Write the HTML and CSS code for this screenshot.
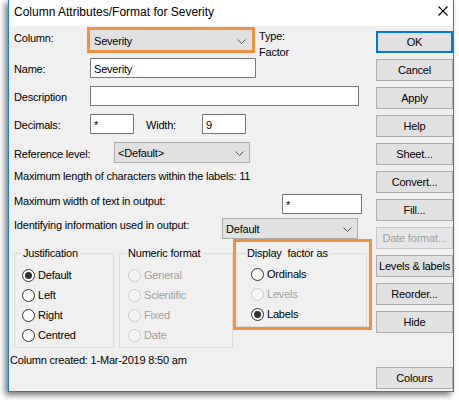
FILE: index.html
```html
<!DOCTYPE html>
<html>
<head>
<meta charset="utf-8">
<link rel="stylesheet" href="styles.css">
</head>
<body>
<div class="dialog">
  <div class="titlebar">
    <span class="title">Column Attributes/Format for Severity</span>
    <svg class="close" width="10" height="10" viewBox="0 0 10 10"><path d="M0.5 0.5 L9.5 9.5 M9.5 0.5 L0.5 9.5" stroke="#000" stroke-width="1.1" fill="none"/></svg>
  </div>
  <div class="content">
    <div class="form">
      <div class="row row-column">
        <span class="lbl lbl-column">Column:</span>
        <div class="hl">
          <div class="combo combo-col"><span>Severity</span><svg class="chev" width="9" height="5" viewBox="0 0 9 5"><polyline points="0.5,0.5 4.5,4.5 8.5,0.5" fill="none" stroke="#555" stroke-width="1"/></svg></div>
        </div>
        <div class="type">Type:<br>Factor</div>
      </div>
      <div class="row row-name">
        <span class="lbl">Name:</span>
        <div class="input w-name">Severity</div>
      </div>
      <div class="row row-desc">
        <span class="lbl">Description</span>
        <div class="input w-desc"></div>
      </div>
      <div class="row row-dec">
        <span class="lbl">Decimals:</span>
        <div class="input w-small">*</div>
        <span class="lbl lbl-width">Width:</span>
        <div class="input w-small">9</div>
      </div>
      <div class="row row-ref">
        <span class="lbl lbl-ref">Reference level:</span>
        <div class="combo w-ref"><span>&lt;Default&gt;</span><svg class="chev" width="9" height="5" viewBox="0 0 9 5"><polyline points="0.5,0.5 4.5,4.5 8.5,0.5" fill="none" stroke="#555" stroke-width="1"/></svg></div>
      </div>
      <div class="maxlen">Maximum length of characters within the labels: 11</div>
      <div class="row row-maxw">
        <span class="lbl lbl-maxw">Maximum width of text in output:</span>
        <div class="input w-maxw">*</div>
      </div>
      <div class="row row-ident">
        <span class="lbl lbl-ident">Identifying information used in output:</span>
        <div class="combo w-ident"><span>Default</span><svg class="chev" width="9" height="5" viewBox="0 0 9 5"><polyline points="0.5,0.5 4.5,4.5 8.5,0.5" fill="none" stroke="#555" stroke-width="1"/></svg></div>
      </div>
      <div class="groups">
        <div class="group g-just">
          <div class="legend">Justification</div>
          <div class="radios">
            <div class="radio"><span class="dot on"></span>Default</div>
            <div class="radio"><span class="dot"></span>Left</div>
            <div class="radio"><span class="dot"></span>Right</div>
            <div class="radio"><span class="dot"></span>Centred</div>
          </div>
        </div>
        <div class="group g-num">
          <div class="legend">Numeric format</div>
          <div class="radios">
            <div class="radio off"><span class="dot"></span>General</div>
            <div class="radio off"><span class="dot"></span>Scientific</div>
            <div class="radio off"><span class="dot"></span>Fixed</div>
            <div class="radio off"><span class="dot"></span>Date</div>
          </div>
        </div>
        <div class="hl-group">
          <div class="group g-disp">
            <div class="legend">Display&nbsp; factor as</div>
            <div class="radios">
              <div class="radio"><span class="dot"></span>Ordinals</div>
              <div class="radio off"><span class="dot"></span>Levels</div>
              <div class="radio"><span class="dot on"></span>Labels</div>
            </div>
          </div>
        </div>
      </div>
      <div class="created">Column created: 1-Mar-2019 8:50 am</div>
    </div>
    <div class="buttons">
      <div class="btn default">OK</div>
      <div class="btn">Cancel</div>
      <div class="btn">Apply</div>
      <div class="btn">Help</div>
      <div class="btn">Sheet...</div>
      <div class="btn">Convert...</div>
      <div class="btn">Fill...</div>
      <div class="btn disabled">Date format...</div>
      <div class="btn">Levels &amp; labels</div>
      <div class="btn">Reorder...</div>
      <div class="btn">Hide</div>
      <div class="btn last">Colours</div>
    </div>
  </div>
</div>
</body>
</html>
```
FILE: styles.css
```css
* { box-sizing: border-box; }
html, body { margin: 0; padding: 0; }
body {
  width: 459px;
  height: 400px;
  overflow: hidden;
  background: #fff;
  font-family: "Liberation Sans", Arial, sans-serif;
  font-size: 11px;
  line-height: 13px;
  letter-spacing: -0.2px;
  color: #000;
}
.dialog {
  margin-left: 8px;
  width: 446px;
  height: 392px;
  background: #f0f0f0;
  border: 1px solid #1c7fd6;
  border-top: none;
  box-shadow: -3px 3px 6px rgba(0, 0, 0, 0.55);
  display: flex;
  flex-direction: column;
}
.titlebar {
  height: 26px;
  background: #fff;
  display: flex;
  align-items: center;
  padding-left: 5px;
  flex: none;
}
.title {
  font-family: "Liberation Sans", Arial, sans-serif;
  font-size: 12px;
  letter-spacing: 0;
  line-height: 16px;
  padding-bottom: 2px;
}
.close { margin-left: auto; margin-right: 5px; margin-bottom: 4px; }
.content {
  flex: 1;
  display: flex;
}
.form {
  width: 366px;
  padding-left: 5px;
  display: flex;
  flex-direction: column;
}
.row { display: flex; align-items: flex-start; }
.lbl { width: 76px; flex: none; padding-top: 5px; }
.row-column { margin-top: 1px; height: 26px; }
.lbl-column { width: 73px; padding-top: 5px; }
.hl {
  border: 3px solid #f0913f;
  width: 168px;
  height: 26px;
}
.combo {
  background: #e1e1e1;
  border: 1px solid #adadad;
  height: 21px;
  display: flex;
  align-items: center;
  padding-left: 3px;
  padding-right: 5px;
  padding-top: 1px;
}
.combo span { flex: 1; }
.combo-col { height: 20px; border-color: #e1e1e1; padding-top: 2px; }
.chev { flex: none; }
.type { margin-left: 4px; margin-top: 1px; line-height: 16px; }
.input {
  background: #fff;
  border: 1px solid #7a7a7a;
  height: 20px;
  padding: 2px 3px 0;
  line-height: 16px;
}
.row-name { margin-top: 5px; }
.w-name { width: 166px; }
.row-desc { margin-top: 8px; }
.w-desc { width: 269px; }
.row-dec { margin-top: 8px; }
.w-small { width: 44px; }
.lbl-width { width: 56px; margin-left: 12px; }
.row-ref { margin-top: 8px; }
.lbl-ref { width: 100px; padding-top: 6px; }
.w-ref { width: 136px; }
.maxlen { margin-top: 7px; }
.row-maxw { margin-top: 11px; }
.lbl-maxw { width: 268px; padding-top: 1px; }
.w-maxw { width: 80px; }
.row-ident { margin-top: 4px; }
.lbl-ident { width: 208px; padding-top: 1px; }
.w-ident { width: 136px; }
.groups {
  display: flex;
  align-items: flex-start;
  height: 110px;
}
.group {
  border: 1px solid #dcdcdc;
}
.g-just { width: 100px; margin-top: 14px; }
.g-num { width: 114px; margin-top: 14px; margin-left: 5px; }
.legend {
  display: block;
  width: fit-content;
  background: #f0f0f0;
  margin-top: -7px;
  margin-left: 6px;
  padding: 0 2px;
}
.radios {
  display: flex;
  flex-direction: column;
  padding-left: 7px;
  margin-top: 5px;
  padding-bottom: 2px;
}
.g-num .radios { padding-left: 8px; }
.radio {
  height: 20px;
  display: flex;
  align-items: center;
}
.dot {
  width: 13px;
  height: 13px;
  border-radius: 50%;
  border: 1px solid #333;
  background: #fff;
  margin-right: 3px;
  flex: none;
  display: flex;
  align-items: center;
  justify-content: center;
}
.dot.on::after {
  content: "";
  width: 7px;
  height: 7px;
  border-radius: 50%;
  background: #333;
}
.radio.off { color: #a0a0a0; }
.radio.off .dot { border-color: #cccccc; background: #f4f4f4; }
.hl-group {
  border: 3px solid #f0913f;
  width: 139px;
  height: 91px;
  margin-left: 0;
}
.g-disp {
  margin-top: 11px;
  margin-left: 1px;
  width: 130px;
  height: 74px;
}
.g-disp .legend { margin-left: 7px; }
.g-disp .radios { padding-left: 13px; margin-top: 4px; }
.created { margin-top: 5px; margin-left: -4px; }
.buttons {
  width: 77px;
  margin-left: auto;
  padding-top: 5px;
  padding-bottom: 2px;
  display: flex;
  flex-direction: column;
  gap: 6px;
}
.btn {
  height: 22px;
  background: #e1e1e1;
  border: 1px solid #adadad;
  display: flex;
  align-items: center;
  justify-content: center;
  padding-top: 1px;
  white-space: nowrap;
}
.btn.default { border: 2px solid #0078d7; }
.btn.disabled { color: #a0a0a0; border-color: #c8c8c8; background: #e6e6e6; }
.btn.last { margin-top: auto; }
```
